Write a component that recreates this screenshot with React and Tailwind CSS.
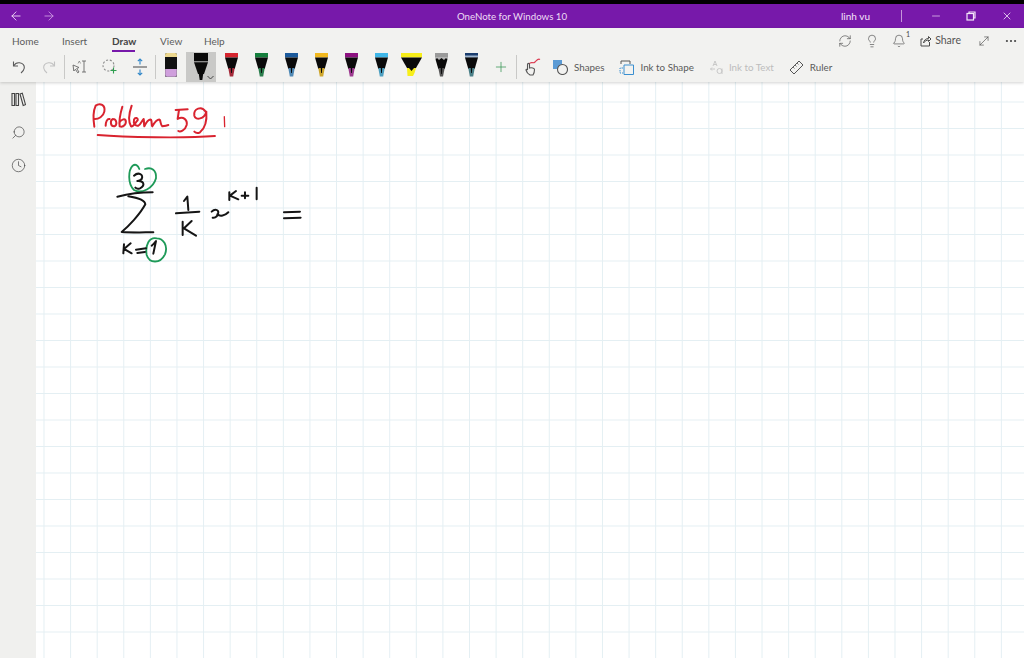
import React from "react";
import { ArrowLeft, ArrowRight, Lightbulb, Bell, Search, Clock, Minus, X, Plus, RefreshCw, MoveDiagonal, Ellipsis } from "lucide-react";

const Pen = ({ cap, nib, tip, cap2 }) => (
  <svg width="13" height="24" viewBox="0 0 13 24" className="mb-[5px]">
    <rect x="0" y="0" width="13" height="4.5" fill={cap} />
    {cap2 && <rect x="0" y="2.5" width="13" height="2" fill={cap2} />}
    <polygon points="0,4.5 13,4.5 9.7,16 3.3,16" fill="#0a0a0a" />
    <polygon points="3.3,15 9.7,15 8.2,23.5 4.8,23.5" fill={nib} />
    <polygon points="5.8,15 7.2,15 6.9,20 6.1,20" fill={tip || "#0a0a0a"} />
  </svg>
);

const Slot = ({ children, className = "" }) => (
  <div className={`w-[30px] h-full flex items-center justify-center shrink-0 ${className}`}>{children}</div>
);

const Sep = () => <div className="w-px h-[24px] bg-[#c9c9c7] shrink-0" />;

const Tab = ({ children, active, className }) => (
  <div className={`relative h-full flex items-center pt-[3px] text-[10px] ${active ? "font-bold text-[#444]" : "text-[#5c5c5c]"} ${className}`}>
    {children}
    {active && <div className="absolute left-0 right-0 bottom-[0.5px] h-[2px] bg-[#7719aa]" />}
  </div>
);

const Lbl = ({ children, className = "text-[#5a5a5a]" }) => <span className={`text-[9.8px] pt-[1px] whitespace-nowrap ${className}`}>{children}</span>;

export default function App() {
  return (
    <div className="w-[1024px] h-[658px] overflow-hidden flex flex-col bg-white font-['Lato',sans-serif]">
      <div className="h-[4px] bg-black shrink-0" />
      <div className="h-[24px] shrink-0 bg-[#7719aa] grid grid-cols-[1fr_auto_1fr] items-center text-white">
        <div className="flex items-center pl-[9px] gap-[19px]">
          <ArrowLeft size={14} strokeWidth={1.5} className="text-[#f3dff9]" />
          <ArrowRight size={14} strokeWidth={1.5} className="text-[#cf9be3]" />
        </div>
        <div className="text-[9.7px] text-[#eedcf5]">OneNote for Windows 10</div>
        <div className="flex items-center justify-end h-full">
          <span className="text-[10px] font-medium text-[#eedcf5] mr-[31px] pt-[1px]">linh vu</span>
          <div className="w-px h-[12px] bg-[#c596da] mr-[28px]" />
          <Minus size={12} strokeWidth={1.5} className="text-[#e5c9ef] mr-[24px]" />
          <svg width="10" height="10" viewBox="0 0 10 10" fill="none" stroke="#f3e6f8" strokeWidth="1.2" className="mr-[25px]">
            <rect x="1" y="2.5" width="6.5" height="6.5" />
            <path d="M3 2.5V1h6v6H7.5" />
          </svg>
          <X size={12} strokeWidth={1.6} className="text-[#f3e6f8] mr-[11px]" />
        </div>
      </div>

      <div className="shrink-0 bg-[#f2f2f0] shadow-[0_1px_3px_rgba(0,0,0,0.18)] z-10 relative">
        <div className="h-[24px] flex items-center">
          <Tab className="ml-[12px] w-[50px]">Home</Tab>
          <Tab className="w-[50px]">Insert</Tab>
          <Tab active className="w-[23px] mr-[25px]">Draw</Tab>
          <Tab className="w-[44px]">View</Tab>
          <Tab>Help</Tab>
          <div className="ml-auto flex items-center h-full pt-[2px] text-[#4a4a4a]">
            <RefreshCw size={14} strokeWidth={1.1} className="mr-[13px]" />
            <Lightbulb size={14} strokeWidth={1.1} className="mr-[13px]" />
            <div className="relative mr-[14px]">
              <Bell size={14} strokeWidth={1.1} />
              <span className="absolute -top-[3px] -right-[4px] text-[7px] leading-none">1</span>
            </div>
            <svg width="12" height="12" viewBox="0 0 12 12" fill="none" stroke="#4a4a4a" strokeWidth="1" className="mr-[3px]">
              <path d="M3 4H1v7h8.5V7" />
              <path d="M3.5 8C4 5 6 3.5 8.5 3.5V1.5L11 4 8.5 6.5V5C6.5 5 5 6 3.5 8z" />
            </svg>
            <span className="text-[10.5px] text-[#555] mr-[16px]">Share</span>
            <MoveDiagonal size={14} strokeWidth={1.1} className="mr-[13px]" />
            <Ellipsis size={14} strokeWidth={1.8} className="mr-[6px]" />
          </div>
        </div>

        <div className="h-[30px] flex items-center pl-[4px]">
          <Slot>
            <svg width="14" height="14" viewBox="0 0 14 14" fill="none" stroke="#5a5a5a" strokeWidth="1.1">
              <path d="M1.5 1.5V6H6" />
              <path d="M1.8 5.8C3 3.5 5 2.5 7.5 2.8 10.5 3.3 12.5 5.5 12.3 8 12 10 11 11.5 9 13" />
            </svg>
          </Slot>
          <Slot>
            <svg width="14" height="14" viewBox="0 0 14 14" fill="none" stroke="#c2c2c2" strokeWidth="1.1">
              <path d="M12.5 1.5V6H8" />
              <path d="M12.2 5.8C11 3.5 9 2.5 6.5 2.8 3.5 3.3 1.5 5.5 1.7 8 2 10 3 11.5 5 13" />
            </svg>
          </Slot>
          <Sep />
          <Slot>
            <svg width="16" height="15" viewBox="0 0 16 15" fill="none" stroke="#666" strokeWidth="0.9">
              <path d="M1 5l6 2.5-2.3 1L7 12l-1.3.8L3.4 9.3 1.8 11z" />
              <path d="M10 1h4M10 12h4M12 1v11" />
              <path d="M6 3.5l1.3-2.5 1.3 2.5" strokeWidth="0.6" />
            </svg>
          </Slot>
          <Slot>
            <svg width="16" height="16" viewBox="0 0 16 16" fill="none" strokeWidth="1.1">
              <circle cx="6.5" cy="6.5" r="5.5" stroke="#8a8a8a" strokeDasharray="2 1.8" />
              <path d="M11.5 8.5v6M8.5 11.5h6" stroke="#2f9e4f" />
            </svg>
          </Slot>
          <Slot>
            <svg width="14" height="18" viewBox="0 0 14 18" fill="none" strokeWidth="1.1">
              <path d="M0 9h14" stroke="#777" strokeWidth="1.4" />
              <path d="M7 1v5.5M4.8 3.2L7 1l2.2 2.2M7 17v-5.5M4.8 14.8L7 17l2.2-2.2" stroke="#2e86c8" />
            </svg>
          </Slot>
          <Sep />
          <Slot>
            <svg width="12" height="24" viewBox="0 0 12 24" className="mb-[5px]">
              <rect width="12" height="24" rx="2" fill="#111" />
              <path d="M0 2a2 2 0 012-2h8a2 2 0 012 2v2H0z" fill="#ecd78e" />
              <path d="M0 16h12v6a2 2 0 01-2 2H2a2 2 0 01-2-2z" fill="#cf9fdc" />
              <path d="M0 16V22a2 2 0 002 2h8a2 2 0 002-2v-6" fill="none" stroke="#666" strokeWidth="0.6" />
            </svg>
          </Slot>
          <Slot className="bg-[#c9c9c7] relative">
            <svg width="14" height="27" viewBox="0 0 14 27" className="-mt-[2px]">
              <rect width="14" height="8" fill="#0a0a0a" />
              <rect y="8" width="14" height="1.2" fill="#8a8a8a" />
              <polygon points="0,9.2 14,9.2 10,21 4,21" fill="#0a0a0a" />
              <polygon points="4.8,21 9.2,21 8.3,27 5.7,27" fill="#0a0a0a" />
            </svg>
            <svg width="7" height="5" viewBox="0 0 7 5" fill="none" stroke="#444" strokeWidth="1" className="absolute right-[2.5px] bottom-[2px]">
              <path d="M0.5 1l3 3 3-3" />
            </svg>
          </Slot>
          <Slot><Pen cap="#d5252f" nib="#a32a39" /></Slot>
          <Slot><Pen cap="#157f3d" nib="#2b7d4d" /></Slot>
          <Slot><Pen cap="#1c5a9c" nib="#4f88b4" /></Slot>
          <Slot><Pen cap="#f2b81e" nib="#cda52c" /></Slot>
          <Slot><Pen cap="#8c1180" nib="#9c3a8f" /></Slot>
          <Slot><Pen cap="#3fb6e8" nib="#4d9fc0" /></Slot>
          <Slot>
            <svg width="21" height="24" viewBox="0 0 21 24" className="mb-[5px]">
              <rect width="21" height="4.5" fill="#f7ee19" />
              <polygon points="0,4.5 21,4.5 15,15 6,15" fill="#0a0a0a" />
              <polygon points="6,15 15,15 13.5,20 12,23 6.5,23" fill="#f7ee19" />
              <polygon points="8,15 13,15 10.5,18" fill="#0a0a0a" />
            </svg>
          </Slot>
          <Slot>
            <svg width="13" height="24" viewBox="0 0 13 24" className="mb-[5px]">
              <rect width="13" height="4.5" fill="#9a9a9a" />
              <polygon points="0,4.5 13,4.5 9.7,16 3.3,16" fill="#0a0a0a" />
              <path d="M0 7l2-2 2 2 2.5-2 2.5 2 2-2 2 2V4H0z" fill="#b4b4b4" />
              <polygon points="3.3,15 9.7,15 8,23.5 5,23.5" fill="#555" />
              <polygon points="5.8,15 7.2,15 6.9,21 6.1,21" fill="#0a0a0a" />
            </svg>
          </Slot>
          <Slot><Pen cap="#1a3d6e" cap2="#9fb6cf" nib="#4a7f87" /></Slot>
          <Slot><Plus size={16} strokeWidth={1.2} className="text-[#3f9a5a]" /></Slot>
          <Sep />
          <Slot>
            <svg width="17" height="18" viewBox="0 0 17 18" fill="none" strokeWidth="1.1">
              <path d="M5 6C7 3 9 6 11 4S14 0 16 1.5" stroke="#dc3a50" />
              <path d="M6 17c-2-1-3.5-3-4-5 0-1 1-1 1.5 0V6.5c0-1.5 2-1.5 2 0V10c2-.5 5 0 5 1.5 0 2-.5 4-1.5 5.5z" stroke="#555" />
            </svg>
          </Slot>
          <div className="flex items-center ml-[6px]">
            <svg width="15" height="15" viewBox="0 0 15 15" fill="none" className="mr-[6px]">
              <rect x="0" y="0" width="9" height="9" fill="#5b9bd5" />
              <circle cx="9.5" cy="9.5" r="5" fill="#f2f2f0" stroke="#555" strokeWidth="1.1" />
            </svg>
            <Lbl>Shapes</Lbl>
          </div>
          <div className="flex items-center ml-[15px]">
            <svg width="15" height="15" viewBox="0 0 15 15" fill="none" className="mr-[6px]" strokeWidth="1">
              <path d="M2 1h9M2 1v3M11 1v3" stroke="#555" />
              <path d="M5 5h9.5v9.5H5z" stroke="#3a8fd0" />
              <path d="M4 8H1v5h3" stroke="#3a8fd0" strokeDasharray="1.5 1" />
            </svg>
            <Lbl>Ink to Shape</Lbl>
          </div>
          <div className="flex items-center ml-[15px]">
            <svg width="15" height="15" viewBox="0 0 15 15" fill="none" stroke="#c4c4c4" strokeWidth="0.9" className="mr-[5px]">
              <path d="M4 6l2-5 2 5M4.7 4.5h2.6" />
              <path d="M6 9H1.5l1.5-1.5M1.5 9L3 10.5" />
              <circle cx="10.5" cy="11" r="2.5" /><path d="M13 8.5V14" />
            </svg>
            <Lbl className="text-[#bdbdbd]">Ink to Text</Lbl>
          </div>
          <div className="flex items-center ml-[15px]">
            <svg width="15" height="15" viewBox="0 0 15 15" fill="none" stroke="#555" strokeWidth="1" className="mr-[6px]">
              <path d="M1 10l9-9 4 4-9 9z" />
              <path d="M4 7l1.5 1.5M6 5l1.5 1.5M8 3l1.5 1.5" strokeWidth="0.8" />
            </svg>
            <Lbl>Ruler</Lbl>
          </div>
        </div>
      </div>

      <div className="flex-1 flex min-h-0">
        <div className="w-[36px] shrink-0 bg-[#f0f0ee] flex flex-col items-center pt-[10px] text-[#444]">
          <svg width="15" height="15" viewBox="0 0 15 15" fill="none" stroke="#444" strokeWidth="1.1">
            <path d="M1 1.5h2.5v12H1zM5 1.5h2.5v12H5zM9 2l2.3-.8 3.2 11.5-2.3.8z" />
          </svg>
          <Search size={15} strokeWidth={1.1} className="mt-[18px] -scale-x-100" />
          <Clock size={15} strokeWidth={1.1} className="mt-[18px]" />
        </div>
        <div className="relative flex-1 bg-white bg-[linear-gradient(to_right,#e4eff3_1px,transparent_1px),linear-gradient(to_bottom,#e4eff3_1px,transparent_1px)] bg-[size:26.6px_26.5px] bg-[position:7.5px_19.5px]">
          <svg className="absolute inset-0 w-full h-full" viewBox="36 82 988 576" fill="none" strokeLinecap="round" strokeLinejoin="round">
            <g transform="translate(85 95) scale(0.3333)" stroke="#d9232f" strokeWidth="6">
              <path d="M28 95C24 70 26 45 32 32C45 22 62 30 58 50C55 65 40 72 30 72" />
              <path d="M62 92C62 82 66 70 74 72" />
              <path d="M84 72C75 75 75 95 88 94C98 90 95 72 84 72" />
              <path d="M112 35C106 55 102 80 104 94C115 98 125 88 122 76C118 70 108 74 104 82" />
              <path d="M140 32C132 55 130 80 138 94C146 96 150 84 158 76C160 68 150 66 147 74C144 86 152 94 160 92C168 88 170 78 176 72C178 80 176 88 178 94C184 82 190 72 198 74C202 80 198 90 202 94C208 84 216 72 224 74C228 80 226 90 232 94C238 93 244 92 250 90" />
              <path d="M272 45L308 43" />
              <path d="M282 45L278 72C295 62 308 75 305 90C300 108 285 112 280 108" />
              <path d="M362 50C350 32 325 40 328 62C332 78 358 72 364 50C366 75 360 100 345 112C338 116 332 114 328 110" />
              <path d="M418 65L419 95" strokeWidth="4" />
              <path d="M38 120C120 127 300 130 390 123" strokeWidth="5.5" />
            </g>
            <g transform="translate(110 155) scale(0.3333)">
              <g stroke="#1e9a58" strokeWidth="5.5">
                <path d="M88 42C84 30 76 26 68 32C55 45 52 85 72 105C95 118 130 100 138 70C140 45 125 35 105 42" />
                <path d="M140 250C118 245 105 270 110 300C118 325 150 328 165 298C175 272 160 250 140 250" />
              </g>
              <g stroke="#151515" strokeWidth="6">
                <path d="M72 62C85 50 102 58 95 72C90 78 82 78 82 78C100 76 108 90 90 100C85 102 78 100 76 98" />
                <path d="M22 125C50 118 100 112 128 112" />
                <path d="M55 124C80 128 105 136 106 148C90 178 55 215 35 231C65 233 100 232 130 232" />
                <path d="M42 268L40 295M62 265L42 282L65 295" />
                <path d="M78 284L108 280M82 294L105 291" />
                <path d="M125 272C130 268 135 262 138 258L130 296" />
                <path d="M222 138L232 125L235 165" />
                <path d="M198 175L268 170" />
                <path d="M218 200L218 240M245 198L222 220L258 242" />
                <path d="M305 170C315 160 325 165 325 172C325 180 318 190 308 188M322 178C330 186 345 182 355 172" />
                <path d="M358 112L358 135M378 108L360 122L385 133" />
                <path d="M395 122L415 122M405 112L405 130" />
                <path d="M440 98L440 133" />
                <path d="M522 172L570 170M522 190L572 188" />
              </g>
            </g>
          </svg>
        </div>
      </div>
    </div>
  );
}
